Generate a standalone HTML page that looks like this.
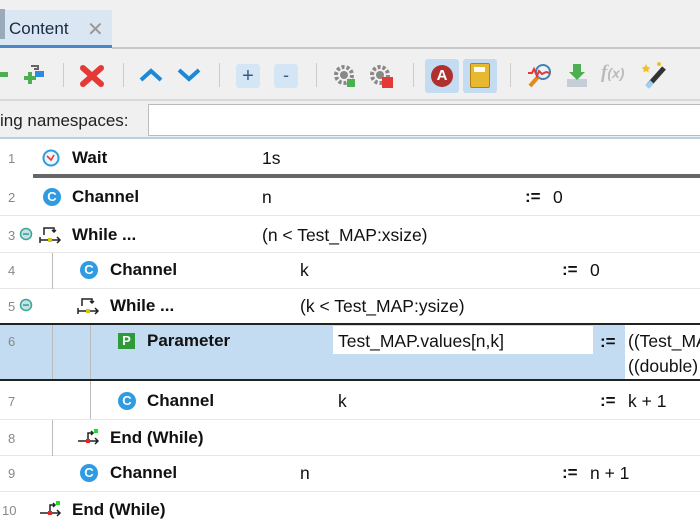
<!DOCTYPE html>
<html><head><meta charset="utf-8"><style>
*{margin:0;padding:0;box-sizing:border-box}
body{width:700px;height:525px;overflow:hidden;background:#f0f0f0;font-family:"Liberation Sans",sans-serif;position:relative;color:#111}
.abs{position:absolute}
.tab{left:0;top:10px;width:112px;height:38px;background:#dae6f2;border-bottom:3px solid #4a86c8}
.tab span{position:absolute;left:9px;top:9px;font-size:17px;color:#1a2a44}
.tab i{position:absolute;left:87px;top:7px;font-style:normal;font-size:20px;color:#999}
.sep{width:1px;height:24px;background:#ccc;top:63px}
.row{position:absolute;left:0;width:700px;border-bottom:1px solid #e6e6e6;background:#fff}
.num{position:absolute;left:8px;font-size:13px;color:#888}
.nm{position:absolute;font-size:17px;font-weight:bold;color:#111}
.v{position:absolute;font-size:17.5px;color:#111}
.as{position:absolute;font-size:17px;font-weight:bold}
.vl{position:absolute;width:1px;background:#bbb}
.ci{position:absolute;width:18px;height:18px;border-radius:50%;background:#2e9be3;color:#fff;font-weight:bold;font-size:13px;text-align:center;line-height:18px}
</style></head><body>
<div class="abs tab"><span>Content</span><i>✕</i></div>
<div class="abs" style="left:0;top:9px;width:5px;height:30px;background:#9ab"></div>
<div class="abs" style="left:112px;top:47px;width:588px;height:2px;background:#c8c8c8"></div>
<div class="abs" style="left:0;top:99px;width:700px;height:2px;background:#d8d8d8"></div>
<!-- toolbar -->
<div class="abs" style="left:0;top:72px;width:8px;height:5px;background:#4caf50"></div>
<svg class="abs" style="left:22px;top:62px" width="26" height="26"><rect x="2" y="14" width="12" height="4" fill="#4caf50"/><rect x="6" y="10" width="4" height="12" fill="#4caf50"/><path d="M9 4h7v3h-4" stroke="#666" stroke-width="2" fill="none"/><rect x="13" y="9" width="9" height="6" fill="#2e8ae0"/></svg>
<div class="abs sep" style="left:63px"></div>
<svg class="abs" style="left:79px;top:64px" width="26" height="24"><path d="M4 4L22 20M22 4L4 20" stroke="#e53935" stroke-width="6" stroke-linecap="round"/></svg>
<div class="abs sep" style="left:123px"></div>
<svg class="abs" style="left:138px;top:66px" width="26" height="18"><path d="M3 14L13 5L23 14" stroke="#1e88d8" stroke-width="4" fill="none"/></svg>
<svg class="abs" style="left:176px;top:66px" width="26" height="18"><path d="M3 4L13 13L23 4" stroke="#1e88d8" stroke-width="4" fill="none"/></svg>
<div class="abs sep" style="left:219px"></div>
<div class="abs" style="left:236px;top:64px;width:24px;height:24px;background:#d4e6f6;border-radius:3px;color:#3a5a80;font-size:20px;text-align:center;line-height:24px">+</div>
<div class="abs" style="left:274px;top:64px;width:24px;height:24px;background:#d4e6f6;border-radius:3px;color:#3a5a80;font-size:18px;text-align:center;line-height:22px">-</div>
<div class="abs sep" style="left:316px"></div>
<svg class="abs" style="left:333px;top:64px" width="24" height="24"><circle cx="11" cy="11" r="8" fill="none" stroke="#888" stroke-width="4" stroke-dasharray="3 2"/><circle cx="11" cy="11" r="4" fill="#888"/><rect x="14" y="15" width="8" height="8" fill="#4caf50"/></svg>
<svg class="abs" style="left:369px;top:64px" width="26" height="26"><circle cx="11" cy="11" r="8" fill="none" stroke="#888" stroke-width="4" stroke-dasharray="3 2"/><circle cx="11" cy="11" r="4" fill="#888"/><rect x="13" y="13" width="11" height="11" fill="#e53935"/></svg>
<div class="abs sep" style="left:413px"></div>
<div class="abs" style="left:425px;top:59px;width:34px;height:34px;background:#c4dcf2;border-radius:3px"></div>
<div class="abs" style="left:431px;top:65px;width:22px;height:22px;border-radius:50%;background:#b03030;color:#fff;font-weight:bold;font-size:15px;text-align:center;line-height:22px">A</div>
<div class="abs" style="left:463px;top:59px;width:34px;height:34px;background:#c4dcf2;border-radius:3px"></div>
<div class="abs" style="left:470px;top:63px;width:20px;height:25px;background:#e8b830;border:1px solid #b08010;border-radius:2px"></div>
<div class="abs" style="left:474px;top:67px;width:11px;height:5px;background:#fff"></div>
<div class="abs sep" style="left:510px"></div>
<svg class="abs" style="left:526px;top:62px" width="28" height="28"><circle cx="17" cy="10" r="7" fill="#e8f2fa" stroke="#4a7fb0" stroke-width="2"/><path d="M12 15L4 24" stroke="#e08a20" stroke-width="4"/><path d="M2 11l4 0 2-4 3 7 2-5 3 3 4-2 4 1" stroke="#e53935" stroke-width="2" fill="none"/></svg>
<svg class="abs" style="left:565px;top:62px" width="24" height="28"><rect x="2" y="17" width="20" height="8" fill="#c5cdd6"/><path d="M8 2h8v8h4l-8 8-8-8h4z" fill="#4caf50"/></svg>
<div class="abs" style="left:601px;top:62px;font-family:'Liberation Serif',serif;font-style:italic;font-weight:bold;color:#bbb;font-size:19px">f<span style="font-size:14px;font-family:'Liberation Sans'">(x)</span></div>
<svg class="abs" style="left:640px;top:60px" width="28" height="30"><path d="M8 26L24 8" stroke="#333" stroke-width="5"/><path d="M7 27L12 22" stroke="#9cd0f0" stroke-width="5"/><path d="M6 4l1.5 3 3 .5-2.3 2 .6 3L6 11l-2.8 1.5.6-3L1.5 7.5l3-.5z" fill="#f0c020"/><circle cx="19" cy="4" r="2" fill="#f0c020"/></svg>
<!-- namespaces -->
<div class="abs" style="left:0;top:111px;font-size:17px;color:#222">ing namespaces:</div>
<div class="abs" style="left:148px;top:104px;width:560px;height:32px;background:#fff;border:1px solid #bbb"></div>
<div class="abs" style="left:0;top:137px;width:700px;height:2px;background:#b8cfe6"></div>
<!-- rows -->
<div class="row" style="top:139px;height:39px;border:none"></div>
<div class="abs" style="left:33px;top:174px;width:667px;height:4px;background:#666"></div>
<span class="num" style="top:151px">1</span>
<svg class="abs" style="left:42px;top:149px" width="18" height="18"><circle cx="9" cy="9" r="7.5" fill="#eef6fc" stroke="#2e9be3" stroke-width="2"/><path d="M5 7l4 4 3-5" stroke="#e53935" stroke-width="1.6" fill="none"/></svg>
<span class="nm" style="left:72px;top:148px">Wait</span><span class="v" style="left:262px;top:148px">1s</span>

<div class="row" style="top:178px;height:38px"></div>
<span class="num" style="top:190px">2</span><div class="ci" style="left:43px;top:188px">C</div>
<span class="nm" style="left:72px;top:187px">Channel</span><span class="v" style="left:262px;top:187px">n</span><span class="as" style="left:525px;top:187px">:=</span><span class="v" style="left:553px;top:187px">0</span>

<div class="row" style="top:216px;height:37px"></div>
<span class="num" style="top:228px">3</span>
<svg class="abs" style="left:19px;top:227px" width="14" height="14"><circle cx="7" cy="7" r="5.5" fill="#cde" stroke="#3a8" stroke-width="1.5"/><rect x="4" y="6.3" width="6" height="1.6" fill="#3a8"/></svg>
<svg class="abs" style="left:38px;top:225px" width="24" height="20"><path d="M6 10V3h10v4M14 5l2 2 2-2M2 15h20M19 12l3 3-3 3M2 12v6" stroke="#222" stroke-width="1.5" fill="none"/><rect x="10" y="13" width="4" height="4" fill="#cc0"/></svg>
<span class="nm" style="left:72px;top:225px">While ...</span><span class="v" style="left:262px;top:225px">(n &lt; Test_MAP:xsize)</span>

<div class="row" style="top:253px;height:36px"></div>
<div class="vl" style="left:52px;top:253px;height:143px"></div>
<span class="num" style="top:263px">4</span><div class="ci" style="left:80px;top:261px">C</div>
<span class="nm" style="left:110px;top:260px">Channel</span><span class="v" style="left:300px;top:260px">k</span><span class="as" style="left:562px;top:260px">:=</span><span class="v" style="left:590px;top:260px">0</span>

<div class="row" style="top:289px;height:35px"></div>
<span class="num" style="top:299px">5</span>
<svg class="abs" style="left:19px;top:298px" width="14" height="14"><circle cx="7" cy="7" r="5.5" fill="#cde" stroke="#3a8" stroke-width="1.5"/><rect x="4" y="6.3" width="6" height="1.6" fill="#3a8"/></svg>
<svg class="abs" style="left:76px;top:296px" width="24" height="20"><path d="M6 10V3h10v4M14 5l2 2 2-2M2 15h20M19 12l3 3-3 3M2 12v6" stroke="#222" stroke-width="1.5" fill="none"/><rect x="10" y="13" width="4" height="4" fill="#cc0"/></svg>
<span class="nm" style="left:110px;top:296px">While ...</span><span class="v" style="left:300px;top:296px">(k &lt; Test_MAP:ysize)</span>

<div class="row" style="top:323px;height:58px;background:#c4dcf2;border-top:2px solid #222;border-bottom:2px solid #222"></div>
<div class="vl" style="left:52px;top:325px;height:54px"></div>
<div class="vl" style="left:90px;top:325px;height:54px"></div>
<span class="num" style="top:334px">6</span>
<div class="abs" style="left:118px;top:333px;width:17px;height:16px;background:#2e9a3a;color:#fff;font-weight:bold;font-size:13px;text-align:center;line-height:16px">P</div>
<span class="nm" style="left:147px;top:331px">Parameter</span>
<div class="abs" style="left:333px;top:326px;width:260px;height:28px;background:#fff"></div>
<span class="v" style="left:338px;top:331px">Test_MAP.values[n,k]</span>
<span class="as" style="left:600px;top:332px">:=</span>
<div class="abs" style="left:625px;top:325px;width:75px;height:54px;background:#fff"></div>
<span class="v" style="left:628px;top:331px">((Test_MAP</span><span class="v" style="left:628px;top:356px">((double)</span>

<div class="row" style="top:381px;height:39px"></div>
<div class="vl" style="left:90px;top:381px;height:38px"></div>
<span class="num" style="top:394px">7</span><div class="ci" style="left:118px;top:392px">C</div>
<span class="nm" style="left:147px;top:391px">Channel</span><span class="v" style="left:338px;top:391px">k</span><span class="as" style="left:600px;top:391px">:=</span><span class="v" style="left:628px;top:391px">k + 1</span>

<div class="row" style="top:420px;height:36px"></div>
<div class="vl" style="left:52px;top:420px;height:72px"></div>
<span class="num" style="top:431px">8</span>
<svg class="abs" style="left:76px;top:428px" width="24" height="20"><path d="M2 13h20M19 10l3 3-3 3M12 13V5h5M15 3l2 2-2 2" stroke="#222" stroke-width="1.5" fill="none"/><rect x="10" y="11" width="4" height="4" fill="#e22"/><rect x="18" y="1" width="4" height="4" fill="#2d2"/></svg>
<span class="nm" style="left:110px;top:428px">End (While)</span>

<div class="row" style="top:456px;height:36px"></div>
<span class="num" style="top:466px">9</span><div class="ci" style="left:80px;top:464px">C</div>
<span class="nm" style="left:110px;top:463px">Channel</span><span class="v" style="left:300px;top:463px">n</span><span class="as" style="left:562px;top:463px">:=</span><span class="v" style="left:590px;top:463px">n + 1</span>

<div class="row" style="top:492px;height:33px;border:none"></div>
<span class="num" style="top:503px;left:2px">10</span>
<svg class="abs" style="left:38px;top:500px" width="24" height="20"><path d="M2 13h20M19 10l3 3-3 3M12 13V5h5M15 3l2 2-2 2" stroke="#222" stroke-width="1.5" fill="none"/><rect x="10" y="11" width="4" height="4" fill="#e22"/><rect x="18" y="1" width="4" height="4" fill="#2d2"/></svg>
<span class="nm" style="left:72px;top:500px">End (While)</span>
</body></html>
